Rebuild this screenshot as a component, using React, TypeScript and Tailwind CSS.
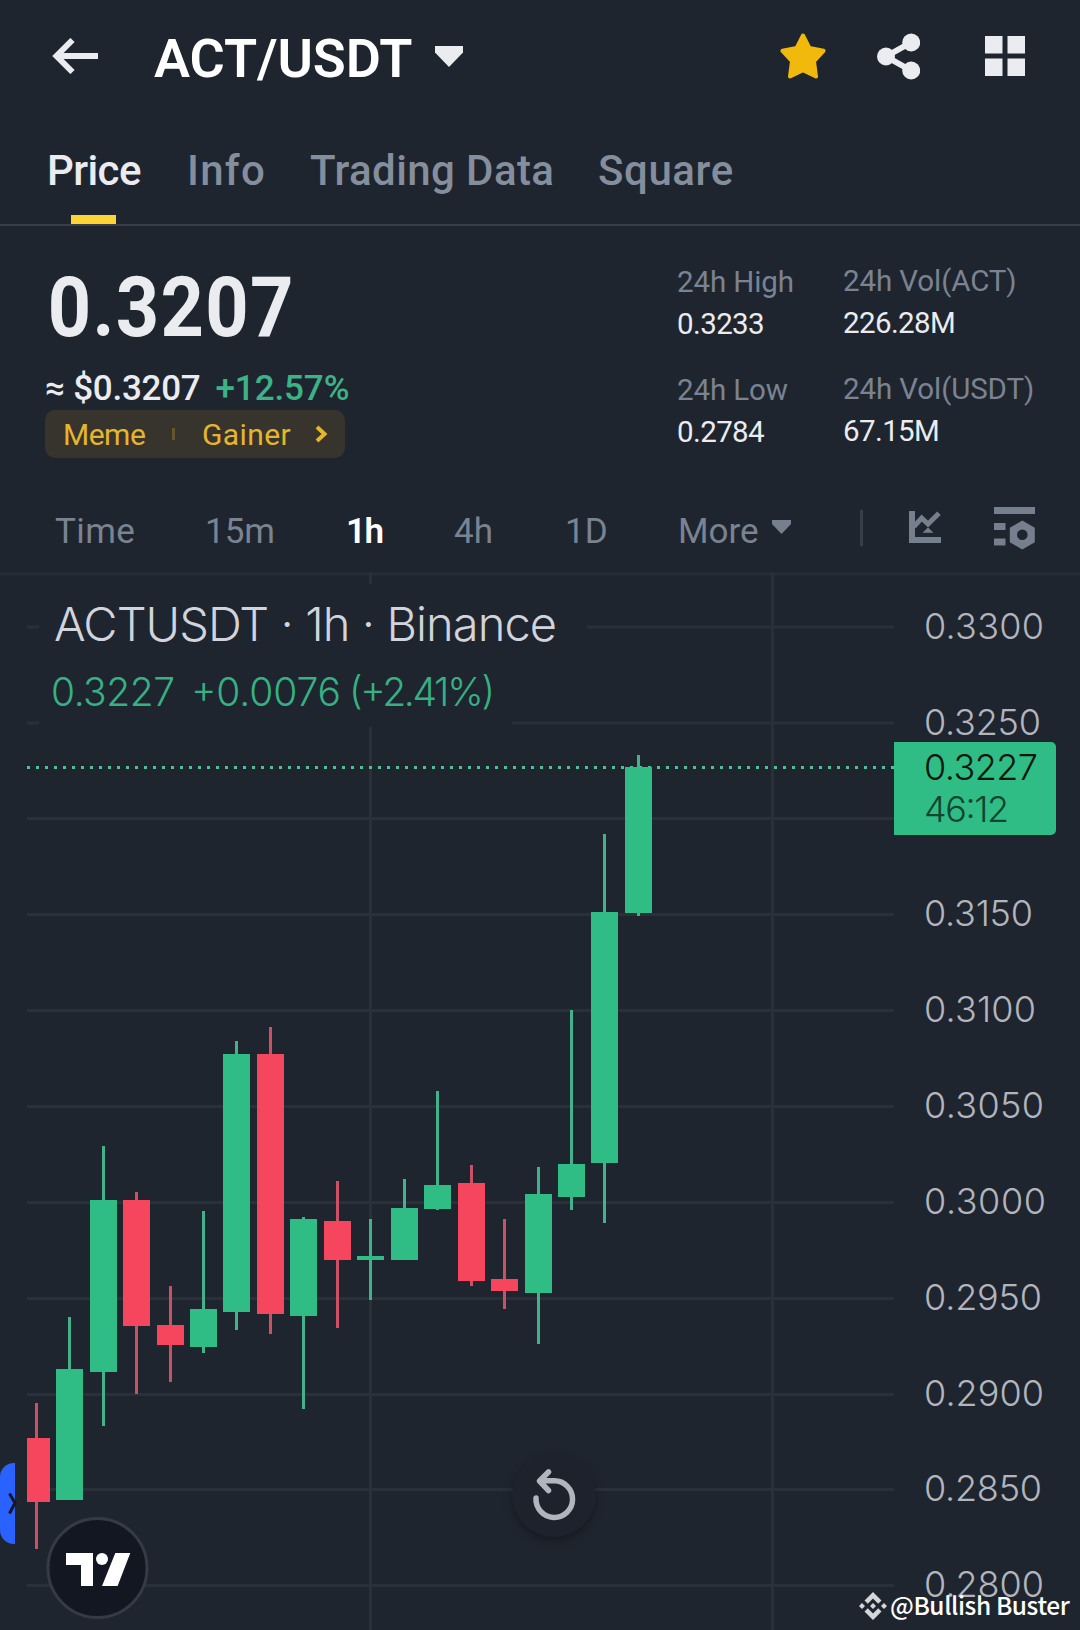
import { clsx } from "clsx";

const UP = "#2fbd85";
const DOWN = "#f6465d";

const tabs = [
  { label: "Price", className: "w-[140px] -ml-px tracking-[-0.6px] text-[#eaecef]" },
  { label: "Info", className: "w-[123px] tracking-[1.3px] text-[#848e9c]" },
  { label: "Trading Data", className: "w-[288px] tracking-[0.4px] text-[#848e9c]" },
  { label: "Square", className: "tracking-[0.6px] text-[#848e9c]" },
];

const stats = [
  { label: "24h High", value: "0.3233", className: "pt-px" },
  { label: "24h Vol(ACT)", value: "226.28M", className: "" },
  { label: "24h Low", value: "0.2784", className: "pt-px" },
  { label: "24h Vol(USDT)", value: "67.15M", className: "" },
];

const intervals = [
  { label: "Time", className: "w-[150px] tracking-[0.4px]" },
  { label: "15m", className: "w-[141px]" },
  { label: "1h", className: "w-[108px] tracking-[-1.5px] font-semibold text-white" },
  { label: "4h", className: "w-[111px]" },
  { label: "1D", className: "w-[113px]" },
];

// price axis: label, y of its grid line, drawn width
const axis = [
  { label: "0.3300", y: 627, w: 117 },
  { label: "0.3250", y: 723, w: 114 },
  { label: "", y: 818.5, w: 0 },
  { label: "0.3150", y: 914.5, w: 106 },
  { label: "0.3100", y: 1010.5, w: 109 },
  { label: "0.3050", y: 1106.5, w: 117 },
  { label: "0.3000", y: 1202.5, w: 119 },
  { label: "0.2950", y: 1298.5, w: 115 },
  { label: "0.2900", y: 1394.5, w: 117 },
  { label: "0.2850", y: 1489.5, w: 115 },
  { label: "0.2800", y: 1585.5, w: 117 },
];

// x, body top, body bottom, wick top, wick bottom, rising
const candles: [number, number, number, number, number, boolean][] = [
  [23, 1438, 1502, 1403, 1549, false],
  [56, 1369, 1500, 1317, 1500, true],
  [90, 1200, 1372, 1146, 1426, true],
  [123, 1200, 1326, 1192, 1394, false],
  [157, 1325, 1345, 1286, 1382, false],
  [190, 1309, 1347, 1211, 1353, true],
  [223, 1054, 1312, 1041, 1330, true],
  [257, 1054, 1314, 1027, 1334, false],
  [290, 1219, 1316, 1217, 1409, true],
  [324, 1221, 1260, 1181, 1328, false],
  [357, 1256, 1260, 1219, 1300, true],
  [391, 1208, 1260, 1179, 1260, true],
  [424, 1185, 1209, 1091, 1210, true],
  [458, 1183, 1281, 1165, 1286, false],
  [491, 1279, 1291, 1219, 1309, false],
  [525, 1194, 1293, 1167, 1344, true],
  [558, 1164, 1197, 1010, 1210, true],
  [591, 912, 1163, 834, 1223, true],
  [625, 767, 913, 755, 916, true],
];

function Header() {
  return (
    <header className="flex h-[112px] items-center pl-[52px] pr-[55px]">
      <svg width="46" height="36" viewBox="0 0 46 36" fill="none" stroke="#eaecef" strokeWidth="6">
        <path d="M8 18h38" />
        <path d="M20.5 2 4.5 18l16 16" />
      </svg>
      <h1 className="ml-[56px] w-[281px] whitespace-nowrap pt-[6px] text-[54px] font-semibold leading-none tracking-[-0.1px] text-white">
        ACT/USDT
      </h1>
      <svg width="28" height="21" viewBox="0 0 28 21" fill="#eaecef">
        <path d="M0 0h28v6.500L14 21 0 6.500Z" />
      </svg>
      <div className="ml-auto flex items-center">
        <svg width="46" height="48" viewBox="0 0 46 48" fill="#f0b90b" stroke="#f0b90b" strokeWidth="4" strokeLinejoin="round">
          <path d="M23 3.500 29.300 16 43.500 18.800 34 29.200 36 44.500 23 38.200 10 44.500 12 29.200 2.500 18.800 16.700 16Z" />
        </svg>
        <svg className="ml-[51px]" width="43" height="47" viewBox="0 0 43 47" fill="#eaecef">
          <path d="M34 9.500 9 23.500l25 14" fill="none" stroke="#eaecef" strokeWidth="6" />
          <circle cx="9" cy="23.500" r="9" />
          <circle cx="34.200" cy="9.500" r="9" />
          <circle cx="34.200" cy="37.500" r="9" />
        </svg>
        <svg className="ml-[65px]" width="40" height="40" viewBox="0 0 40 40" fill="#eaecef">
          <path d="M0 0h17.500v17.500H0ZM22.500 0H40v17.500H22.500ZM0 22.500h17.500V40H0ZM22.500 22.500H40V40H22.500Z" />
        </svg>
      </div>
    </header>
  );
}

function Tabs() {
  return (
    <nav className="flex h-[114px] flex-col border-b-2 border-[#373d49]">
      <div className="flex h-[103px] items-center pb-[3px] pl-[48px] pt-[17px]">
        {tabs.map((tab) => (
          <span
            key={tab.label}
            className={clsx("whitespace-nowrap text-[42px] font-medium leading-[60px]", tab.className)}
          >
            {tab.label}
          </span>
        ))}
      </div>
      <div className="ml-[71px] h-[9px] w-[45px] bg-[#fcd535]" />
    </nav>
  );
}

function Summary() {
  return (
    <section className="flex h-[258px] pt-[38px]">
      <div className="w-[678px] pl-[46px]">
        <p className="origin-left scale-x-[0.9] pl-[2px] text-[84px] font-bold leading-[88px] tracking-[1.5px] text-[#eaecef]">
          0.3207
        </p>
        <p className="mt-px -ml-px flex h-[52px] items-center gap-[16px] pt-[21px] text-[35px] font-medium tracking-[-0.25px] text-[#eaecef]">
          <span className="whitespace-nowrap">≈ $0.3207</span>
          <span className="-ml-px tracking-[-0.1px] text-[#3cb387]">+12.57%</span>
        </p>
        <div className="-ml-px mt-[5px] flex h-[48px] w-[300px] items-center rounded-[10px] bg-[#36342c] pl-[18px] text-[30px] text-[#e5b62c]">
          <span className="w-[109px] tracking-[-0.5px]">Meme</span>
          <span className="h-[12px] w-[3px] bg-[#665629]" />
          <span className="ml-[27px] w-[113px] tracking-[0.4px]">Gainer</span>
          <svg width="13" height="18" viewBox="0 0 13 18" fill="none" stroke="#e5b62c" strokeWidth="4">
            <path d="m2 2 7.500 7L2 16" />
          </svg>
        </div>
      </div>
      <dl className="-mt-[4px] grid grid-cols-[166px_auto] content-start">
        {stats.map((stat) => (
          <div
            key={stat.label}
            className={clsx("h-[108px] whitespace-nowrap text-[29.500px] leading-[42px]", stat.className)}
          >
            <dt className="-ml-px tracking-[-0.1px] text-[#7a8391]">{stat.label}</dt>
            <dd className="-ml-px tracking-[-0.6px] text-[#eaecef]">{stat.value}</dd>
          </div>
        ))}
      </dl>
    </section>
  );
}

function Toolbar() {
  return (
    <div className="flex h-[88px] items-center pl-[55px] text-[35px] text-[#7a8391]">
      {intervals.map((item) => (
        <span key={item.label} className={clsx("pt-[9px]", item.className)}>
          {item.label}
        </span>
      ))}
      <span className="w-[94px] pt-[9px]">More</span>
      <svg className="mb-[2px]" width="19" height="14" viewBox="0 0 19 14" fill="#767f8d">
        <path d="M0 0h19v4L9.500 14 0 4Z" />
      </svg>
      <span className="ml-[69px] h-[36px] w-[3px] bg-[#373d49]" />
      <svg className="mb-[3px] ml-[46px]" width="32" height="32" viewBox="0 0 32 32" fill="#767f8d">
        <path d="M0 0h6v26h26v6H0Z" />
        <path d="m19 16.500 5.500 5.200h-11Z" />
        <path d="m5 15.500 7.700-8.500 6.300 6L30 2.300" fill="none" stroke="#767f8d" strokeWidth="5" />
      </svg>
      <svg className="ml-[53px]" width="42" height="43" viewBox="0 0 42 43" fill="#767f8d">
        <path d="M0 0h41v7H0ZM0 16h11.500v7H0ZM0 31.500h11.500v7H0Z" />
        <path
          fillRule="evenodd"
          d="m28.300 13.500 12.500 7.200v14.500l-12.500 7.200-12.500-7.200V20.700ZM28.300 22.500a5.300 5.300 0 1 0 0 10.600 5.300 5.300 0 0 0 0-10.600Z"
        />
      </svg>
    </div>
  );
}

function Chart() {
  return (
    <svg
      className="block font-[Inter,sans-serif] font-light"
      width="1080"
      height="1058"
      viewBox="0 572 1080 1058"
    >
      <g fill="#2a303a">
        <rect x="0" y="572.500" width="1080" height="3" fill="#272d38" />
        {axis.map((tick) => (
          <rect key={tick.y} x="27" y={tick.y - 1.5} width="867" height="3" />
        ))}
        <rect x="369" y="572" width="3" height="1058" />
        <rect x="771" y="572" width="3" height="1058" />
      </g>

      {/* legend backdrop hides the grid behind the titles */}
      <path d="M39 584h548v76h-75v67H39Z" fill="#1f252f" />
      <text x="54" y="641" fontSize="47" fill="#d1d4dc" textLength="503">
        ACTUSDT · 1h · Binance
      </text>
      <g fontSize="39" fill="#36b184">
        <text x="51" y="706" textLength="124">0.3227</text>
        <text x="191" y="706" textLength="150">+0.0076</text>
        <text x="349" y="706" textLength="146">(+2.41%)</text>
      </g>

      <path d="M27 767.500H894" stroke="#4cc195" strokeWidth="3" strokeDasharray="3 6" />

      {candles.map(([x, top, bottom, high, low, rising]) => (
        <g key={x}>
          <rect x={x + 12} y={high} width="3" height={low - high} fill={rising ? "#43b189" : "#cb5066"} />
          <rect
            x={Math.max(x, 27)}
            y={top}
            width={x < 27 ? 23 : 27}
            height={bottom - top}
            fill={rising ? UP : DOWN}
          />
        </g>
      ))}

      <g fontSize="36" fill="#b2b5be">
        {axis.filter((tick) => tick.label).map((tick) => (
          <text key={tick.y} x="924" y={tick.y + 11.500} textLength={tick.w + 3}>
            {tick.label}
          </text>
        ))}
      </g>

      <path d="M894 742h157a5 5 0 0 1 5 5v83a5 5 0 0 1-5 5H894Z" fill={UP} />
      <text x="924" y="780" fontSize="36" fill="#08160f" textLength="114">0.3227</text>
      <text x="924" y="822" fontSize="36" fill="#11452f" textLength="85">46:12</text>

      <g>
        <path d="M15 1463h-1a14 14 0 0 0-14 14v53a14 14 0 0 0 14 14h1Z" fill="#2962ff" />
        <path d="m9.500 1493.500 5.500 9.500-5.500 10.500" fill="none" stroke="#131722" strokeWidth="3" />
      </g>

      <circle cx="97.500" cy="1568" r="49.500" fill="#131722" stroke="#363a45" strokeWidth="3" />
      <path d="M66 1553h27v33H81v-21H66ZM115.300 1553h15l-12.700 33H102Z" fill="#fff" />
      <circle cx="102" cy="1559" r="6" fill="#fff" />

      <circle
        cx="554"
        cy="1495"
        r="42"
        fill="#1e222d"
        className="drop-shadow-[0_4px_4px_rgba(0,0,0,0.3)]"
      />
      <path
        d="M536 1498a18.300 18.300 0 1 0 18.300-17.200H541M548.500 1472l-9 9 9 9.500"
        fill="none"
        stroke="#b2b5be"
        strokeWidth="5.500"
        strokeLinecap="round"
        strokeLinejoin="round"
      />
    </svg>
  );
}

function Watermark() {
  return (
    <div className="absolute bottom-[7px] right-[7px] flex items-center gap-[3px]">
      <svg width="28" height="28" viewBox="0 0 28 28" fill="#d5d6d8">
        <path d="m14 0 8.500 8.500-3.300 3.300L14 6.600l-5.200 5.200-3.300-3.300ZM14 28l8.500-8.500-3.300-3.300-5.200 5.200-5.200-5.200-3.300 3.300ZM3 11l3 3-3 3-3-3ZM25 11l3 3-3 3-3-3ZM14 11l3 3-3 3-3-3Z" />
      </svg>
      <span className="w-[183px] whitespace-nowrap pb-px font-['Noto_Sans_CJK_SC',sans-serif] text-[24.500px] font-medium leading-[34px] tracking-[-0.4px] text-white">
        @Bullish Buster
      </span>
    </div>
  );
}

export default function App() {
  return (
    <main className="relative h-[1630px] w-[1080px] overflow-hidden bg-[#1f252f] font-[Roboto,sans-serif]">
      <Header />
      <Tabs />
      <Summary />
      <Toolbar />
      <Chart />
      <Watermark />
    </main>
  );
}
